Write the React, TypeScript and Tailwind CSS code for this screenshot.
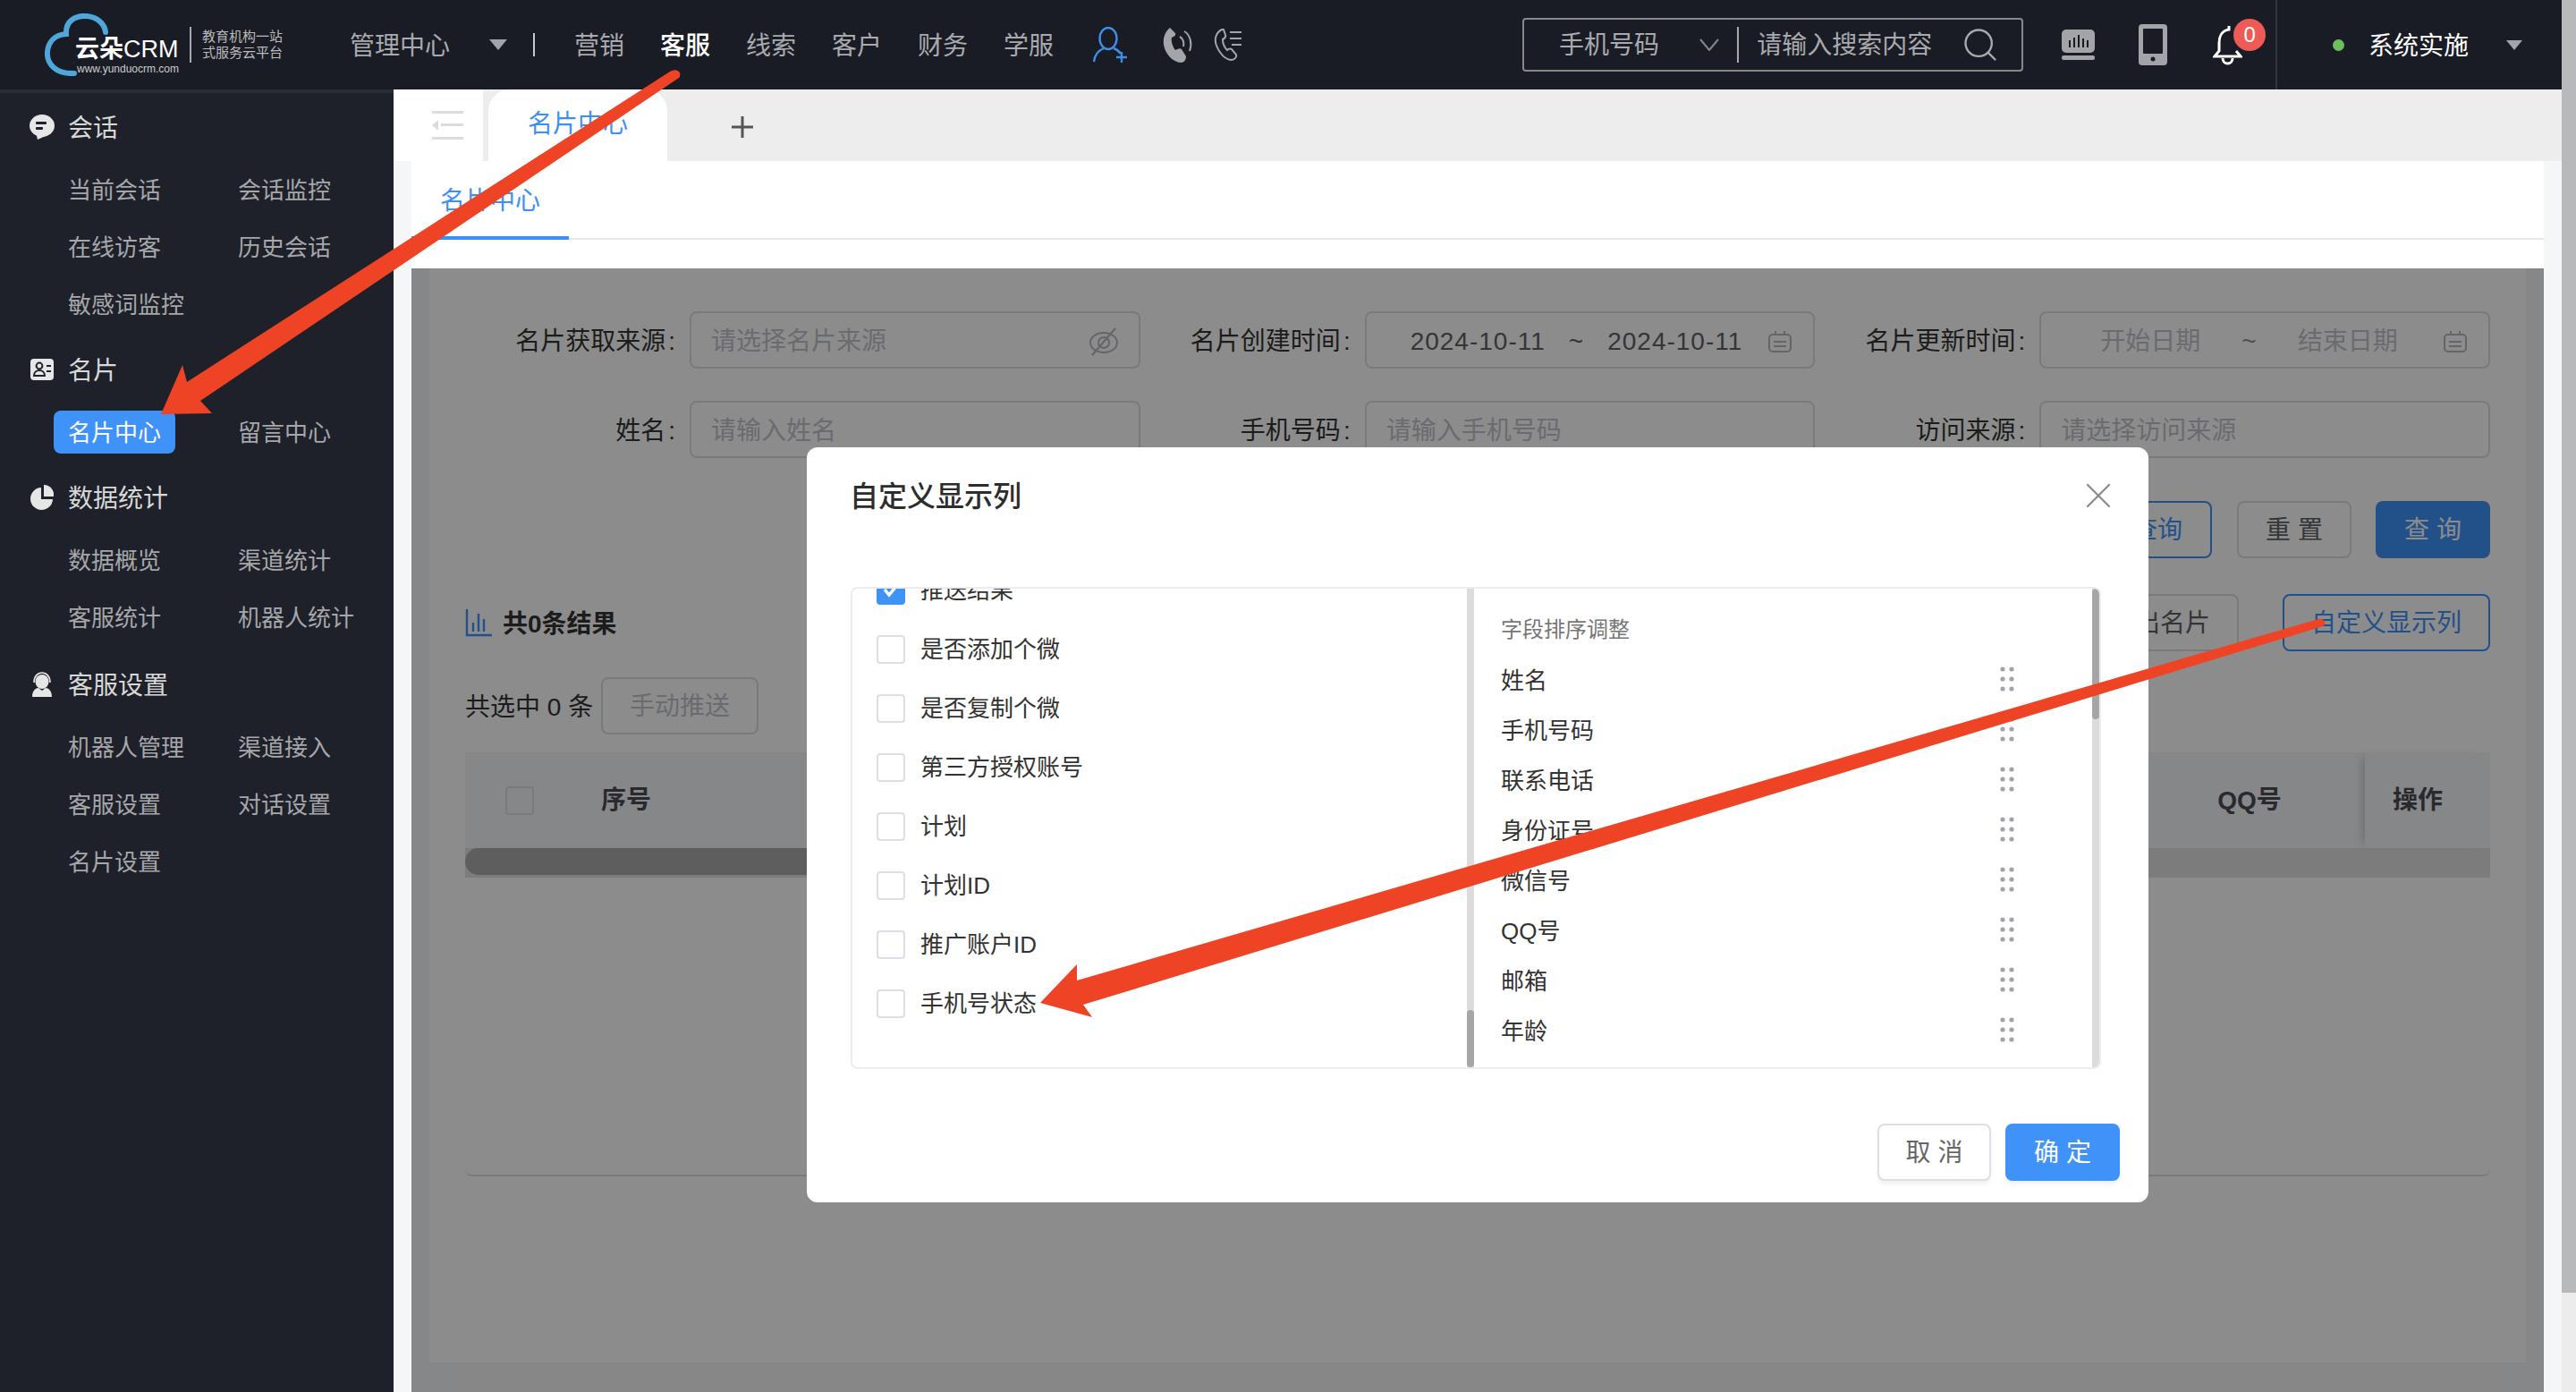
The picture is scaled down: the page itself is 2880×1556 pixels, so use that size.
import React from 'react';
import { Search, X } from 'lucide-react';

const navItems = ['营销', '客服', '线索', '客户', '财务', '学服'];

const menu = [
  { title: '会话', icon: 'chat', gap: '', items: ['当前会话', '会话监控', '在线访客', '历史会话', '敏感词监控'] },
  { title: '名片', icon: 'card', gap: 'mt-[3px]', items: ['名片中心', '留言中心'] },
  { title: '数据统计', icon: 'pie', gap: 'mt-[3px]', items: ['数据概览', '渠道统计', '客服统计', '机器人统计'] },
  { title: '客服设置', icon: 'agent', gap: 'mt-[5px]', items: ['机器人管理', '渠道接入', '客服设置', '对话设置', '名片设置'] },
];

const columnOptions = ['推送结果', '是否添加个微', '是否复制个微', '第三方授权账号', '计划', '计划ID', '推广账户ID', '手机号状态'];
const sortFields = ['姓名', '手机号码', '联系电话', '身份证号', '微信号', 'QQ号', '邮箱', '年龄'];

const Triangle = ({ className }: { className: string }) => (
  <svg className={className} viewBox="0 0 20 12">
    <polygon points="0,0 20,0 10,12" fill="#a3a4a8" />
  </svg>
);

const MenuIcon = ({ name }: { name: string }) => {
  if (name === 'chat') {
    return (
      <svg className="w-[28px] h-[28px]" viewBox="0 0 28 28">
        <ellipse cx="14" cy="12.5" rx="14" ry="12.5" fill="#e6e6e6" />
        <polygon points="7,20 18,24 9,28" fill="#e6e6e6" />
        <rect x="7" y="8" width="12" height="3" rx="1" fill="#1e2129" />
        <rect x="7" y="14" width="8" height="3" rx="1" fill="#1e2129" />
      </svg>
    );
  }
  if (name === 'card') {
    return (
      <svg className="w-[26px] h-[24px]" viewBox="0 0 26 24">
        <rect width="26" height="24" rx="4" fill="#e6e6e6" />
        <circle cx="10" cy="8" r="3.4" fill="none" stroke="#1e2129" strokeWidth="2" />
        <path d="M4 19c0-4 3-6 6-6s6 2 6 6z" fill="none" stroke="#1e2129" strokeWidth="2" />
        <rect x="18" y="7" width="5" height="2" fill="#1e2129" />
        <rect x="18" y="13" width="5" height="2" fill="#1e2129" />
      </svg>
    );
  }
  if (name === 'pie') {
    return (
      <svg className="w-[26px] h-[28px]" viewBox="0 0 26 28">
        <path d="M12 3a12.5 12.5 0 1 0 13 13H12z" fill="#e6e6e6" />
        <path d="M15 0a11 11 0 0 1 11 13H15z" fill="#e6e6e6" />
      </svg>
    );
  }
  return (
    <svg className="w-[26px] h-[28px]" viewBox="0 0 26 28">
      <path d="M4 12C4 5 8 1 13 1s9 4 9 11" fill="none" stroke="#e6e6e6" strokeWidth="1.6" />
      <ellipse cx="13" cy="11" rx="7.5" ry="8" fill="#e6e6e6" />
      <path d="M2 28c0-7 4-10 7-10l4 3 4-3c3 0 7 3 7 10z" fill="#e6e6e6" />
    </svg>
  );
};

const CalendarIcon = () => (
  <svg className="w-[26px] h-[24px] shrink-0" viewBox="0 0 26 24" fill="none" stroke="#b4b8c0" strokeWidth="2">
    <rect x="1" y="4" width="24" height="19" rx="4" />
    <path d="M8 0v5M18 0v5M6 12h14M6 17h14" />
  </svg>
);

const Field = ({ label, children }: { label: string; children: React.ReactNode }) => (
  <div className="flex items-center">
    <div className="w-[235px] shrink-0 pt-[3px] text-right text-[28px] text-[#333] whitespace-nowrap">
      {label}
      <span className="ml-[3px]">:</span>
    </div>
    <div className="flex-1 ml-[16px] h-[64px] border-2 border-[#dcdfe6] rounded-[8px] flex items-center pl-[22px] pt-[3px] text-[28px] text-[#c0c4cc] relative">
      {children}
    </div>
  </div>
);

const Btn = ({ children, className }: { children: React.ReactNode; className: string }) => (
  <button className={`h-[64px] pt-[2px] rounded-[8px] border-2 text-[28px] flex items-center justify-center shrink-0 ${className}`}>
    {children}
  </button>
);

const CheckBox = ({ checked }: { checked?: boolean }) => (
  <span className={`w-[32px] h-[32px] rounded-[4px] shrink-0 flex items-center justify-center border-2 ${checked ? 'bg-[#3e92f8] border-[#3e92f8]' : 'bg-white border-[#dcdfe6]'}`}>
    {checked && (
      <svg className="w-[20px] h-[20px]" viewBox="0 0 20 20" fill="none" stroke="#fff" strokeWidth="3.5">
        <path d="M3 9l5 6 9-11" />
      </svg>
    )}
  </span>
);

const DragHandle = () => (
  <svg className="w-[16px] h-[28px]" viewBox="0 0 16 28" fill="#a0a4ac">
    {[3, 14, 25].map(y => (
      <React.Fragment key={y}>
        <circle cx="3" cy={y} r="2.6" />
        <circle cx="13" cy={y} r="2.6" />
      </React.Fragment>
    ))}
  </svg>
);

const Header = () => (
  <div className="h-[100px] bg-[#1a1c25] flex items-center pl-[50px] text-[#a9aaad] text-[28px] shrink-0">
    {/* logo */}
    <div className="relative w-[150px] h-[70px] shrink-0">
      <svg className="absolute left-0 top-0 w-[80px] h-[70px]" viewBox="0 0 80 70" fill="none">
        <path d="M33 67C12 68 2 56 3 43 4 31 12 24 24 23 23 8 35 2 47 3c11 1 20 8 21 18" stroke="#4fa6da" strokeWidth="6" strokeLinecap="round" />
      </svg>
      <span className="absolute left-[34px] top-[24px] text-[27px] leading-[32px] font-bold text-white whitespace-nowrap">
        云朵<span className="font-normal">CRM</span>
      </span>
      <span className="absolute left-[36px] top-[55px] text-[12px] leading-[14px] text-[#ccc] whitespace-nowrap">www.yunduocrm.com</span>
    </div>
    <div className="w-[2px] h-[40px] bg-[#aaa] ml-[12px] shrink-0" />
    <div className="ml-[12px] w-[90px] text-[15px] leading-[18px] text-[#bbb] shrink-0">
      <div>教育机构一站</div>
      <div>式服务云平台</div>
    </div>

    <span className="ml-[75px] pt-[3px] whitespace-nowrap">管理中心</span>
    <Triangle className="ml-[44px] w-[20px] h-[12px] shrink-0" />
    <div className="ml-[29px] w-[2px] h-[26px] bg-[#c8c8c8] shrink-0" />
    <div className="ml-[44px] pt-[3px] flex gap-[40px] whitespace-nowrap">
      {navItems.map(item => (
        <span key={item} className={item === '客服' ? 'text-white font-medium' : ''}>{item}</span>
      ))}
    </div>

    <svg className="ml-[43px] w-[40px] h-[40px] shrink-0" viewBox="0 0 40 40" fill="none" stroke="#3d8ee8" strokeWidth="2.4">
      <ellipse cx="18" cy="13" rx="9.5" ry="12" />
      <path d="M2 39c1-9 6-13 11-15M24 24c3 1 6 3 8 6M33 28v12M27 34h12" />
    </svg>
    <svg className="ml-[38px] w-[36px] h-[40px] shrink-0" viewBox="0 0 36 40">
      <path d="M9 1C3 6 0 14 3 24c3 9 11 16 19 16 4-1 5-4 5-7l-5-8c-2-2-5 0-7 1-3-4-5-10-4-14 2-1 5-2 4-5z" fill="#a4a5a9" />
      <path d="M20 11c4 2 5 7 4 11M25 5c7 4 9 14 6 22" fill="none" stroke="#a4a5a9" strokeWidth="2" />
    </svg>
    <svg className="ml-[22px] w-[32px] h-[36px] shrink-0" viewBox="0 0 32 36" fill="none" stroke="#a4a5a9" strokeWidth="2">
      <path d="M9 1C3 4 0 11 3 19c3 8 9 15 16 16 4 0 7-3 6-6l-5-6c-2-1-4 0-5 1-3-3-5-8-5-12 2-1 4-2 3-5L11 1z" />
      <path d="M18 4h13M18 11h13M20 18h11" />
    </svg>

    {/* search */}
    <div className="ml-[313px] w-[560px] h-[60px] border-2 border-[#888] rounded-[4px] flex items-center pl-[39px] shrink-0 whitespace-nowrap">
      <span className="pt-[2px]">手机号码</span>
      <svg className="ml-[45px] w-[22px] h-[14px] shrink-0" viewBox="0 0 22 14" fill="none" stroke="#888" strokeWidth="2">
        <path d="M1 1l10 12L21 1" />
      </svg>
      <div className="ml-[20px] w-[2px] h-[40px] bg-[#aaa] shrink-0" />
      <span className="ml-[20px] pt-[2px]">请输入搜索内容</span>
      <Search className="ml-[32px] w-[44px] h-[44px] text-[#a9aaad] shrink-0" strokeWidth={1.3} />
    </div>

    <svg className="ml-[43px] w-[37px] h-[34px] shrink-0" viewBox="0 0 37 34">
      <rect width="37" height="26" rx="5" fill="#a3a4a8" />
      <path d="M9 12v8M14 9v11M19 6v14M24 10v10M29 12v8" stroke="#1a1c25" strokeWidth="2" />
      <rect y="29" width="37" height="5" rx="2" fill="#a3a4a8" />
    </svg>
    <svg className="ml-[49px] w-[32px] h-[46px] shrink-0" viewBox="0 0 32 46">
      <rect width="32" height="46" rx="4" fill="#a3a4a8" />
      <rect x="5" y="5" width="22" height="28" rx="1" fill="#1a1c25" />
      <circle cx="16" cy="39" r="2.5" fill="#1a1c25" />
    </svg>
    <div className="ml-[51px] relative w-[33px] h-[46px] shrink-0">
      <svg className="w-[33px] h-[46px]" viewBox="0 0 33 46" fill="none" stroke="#fff" strokeWidth="3">
        <path d="M18 2v4C10 7 7 14 7 21v9l-5 6h29l-5-6" />
        <path d="M11 38c0 8 11 8 11 0" />
      </svg>
      <span className="absolute left-[23px] top-[-6px] w-[36px] h-[36px] rounded-full bg-[#ee5b56] text-white text-[24px] flex items-center justify-center">0</span>
    </div>
    <div className="ml-[37px] w-[2px] h-full bg-[#32353e] shrink-0" />
    <span className="ml-[62px] w-[13px] h-[13px] rounded-full bg-[#6cbf5c] shrink-0" />
    <span className="ml-[27px] pt-[3px] text-white whitespace-nowrap">系统实施</span>
    <Triangle className="ml-[42px] w-[18px] h-[11px] shrink-0" />
  </div>
);

const Sidebar = () => (
  <div className="w-[440px] shrink-0 bg-[#1e2129] border-t-4 border-[#2a2d35]">
    {menu.map(section => (
      <div key={section.title} className={section.gap}>
        <div className="h-[76px] flex items-center text-[28px] text-[#d8d8d8]">
          <div className="w-[76px] flex justify-center pl-[20px] pr-[2px] shrink-0">
            <MenuIcon name={section.icon} />
          </div>
          <span className="pt-[3px]">{section.title}</span>
        </div>
        <div className="grid grid-cols-[190px_1fr] pl-[60px] text-[26px] text-[#a6a7aa]">
          {section.items.map(item => (
            <div key={item} className="h-[64px] flex items-center">
              <span className={`h-[48px] px-[16px] pt-[2px] flex items-center rounded-[8px] whitespace-nowrap ${item === '名片中心' ? 'bg-[#3e92f8] text-white' : ''}`}>
                {item}
              </span>
            </div>
          ))}
        </div>
      </div>
    ))}
  </div>
);

const Modal = () => (
  <div className="absolute left-[442px] top-[200px] w-[1500px] h-[844px] bg-white rounded-[12px]">
    <div className="h-[108px] flex items-center justify-between pl-[48px] pr-[32px]">
      <span className="pt-[2px] text-[32px] font-medium text-[#2d2d2d]">自定义显示列</span>
      <X className="w-[48px] h-[48px] text-[#888]" strokeWidth={1.1} />
    </div>

    <div className="mt-[48px] ml-[49px] mr-[53px] h-[539px] border-2 border-[#ededf0] rounded-[8px] flex overflow-hidden">
      <div className="w-[687px] shrink-0 overflow-hidden">
        <div className="-mt-[31px]">
          {columnOptions.map((opt, i) => (
            <div key={opt} className="h-[66px] flex items-center pl-[27px] text-[26px] text-[#333]">
              <CheckBox checked={i === 0} />
              <span className="ml-[17px]">{opt}</span>
            </div>
          ))}
        </div>
      </div>
      <div className="w-[8px] shrink-0 bg-[#dcdcdc] flex flex-col justify-end">
        <div className="h-[64px] bg-[#a6a6a6] rounded-[4px]" />
      </div>
      <div className="flex-1 pl-[30px] pr-[87px] pt-[25px]">
        <div className="h-[40px] pt-[2px] flex items-center text-[24px] text-[#777]">字段排序调整</div>
        <div className="mt-[8px]">
          {sortFields.map(f => (
            <div key={f} className="h-[56px] flex items-center justify-between text-[26px] text-[#333]">
              <span className="pt-[5px]">{f}</span>
              <DragHandle />
            </div>
          ))}
        </div>
      </div>
      <div className="w-[8px] shrink-0 bg-[#dcdcdc]">
        <div className="h-[146px] bg-[#a6a6a6] rounded-[4px]" />
      </div>
    </div>

    <div className="mt-[61px] flex justify-end gap-[16px] pr-[32px]">
      <Btn className="w-[127px] border-[#dcdfe6] bg-white text-[#666] shadow-[0_4px_4px_#f2f2f2]">取 消</Btn>
      <Btn className="w-[128px] border-[#3e92f8] bg-[#3e92f8] text-white shadow-[0_4px_4px_#f2f2f2]">确 定</Btn>
    </div>
  </div>
);

const PageContent = () => (
  <div className="bg-white mx-[20px] h-[1223px] pt-[48px] px-[40px]">
    <div className="grid grid-cols-3 gap-y-[36px]">
      <Field label="名片获取来源">
        请选择名片来源
        <svg className="absolute right-[22px] w-[34px] h-[32px]" viewBox="0 0 34 32" fill="none" stroke="#b4b8c0" strokeWidth="2">
          <ellipse cx="17" cy="17" rx="15" ry="11" />
          <circle cx="17" cy="17" r="6" />
          <path d="M30 1L4 31" />
        </svg>
      </Field>
      <Field label="名片创建时间">
        <div className="flex items-center pl-[27px] text-[#606266] tracking-[1px] whitespace-nowrap">
          <span>2024-10-11</span>
          <span className="ml-[26px]">~</span>
          <span className="ml-[26px]">2024-10-11</span>
        </div>
        <span className="absolute right-[24px] flex"><CalendarIcon /></span>
      </Field>
      <Field label="名片更新时间">
        <div className="flex items-center pl-[44px] whitespace-nowrap">
          <span>开始日期</span>
          <span className="ml-[46px] text-[#909399]">~</span>
          <span className="ml-[46px]">结束日期</span>
        </div>
        <span className="absolute right-[24px] flex"><CalendarIcon /></span>
      </Field>
      <Field label="姓名">请输入姓名</Field>
      <Field label="手机号码">请输入手机号码</Field>
      <Field label="访问来源">请选择访问来源</Field>
    </div>

    <div className="mt-[48px] flex justify-end">
      <Btn className="w-[178px] border-[#3e92f8] text-[#3e92f8]">高级查询</Btn>
      <Btn className="ml-[28px] w-[128px] border-[#dcdfe6] text-[#606266]">重 置</Btn>
      <Btn className="ml-[27px] w-[128px] border-[#3e92f8] bg-[#3e92f8] text-white">查 询</Btn>
    </div>

    <div className="mt-[40px] flex items-center justify-between">
      <div className="flex items-center text-[28px] font-bold text-[#333]">
        <svg className="w-[30px] h-[32px] mr-[12px]" viewBox="0 0 30 32" fill="none" stroke="#3e92f8" strokeWidth="2.4">
          <path d="M2 1v29h28M9 16v10M15 6v20M21 12v14" />
        </svg>
        <span className="pt-[3px]">共0条结果</span>
      </div>
      <div className="flex">
        <Btn className="w-[176px] border-[#dcdfe6] text-[#606266]">导出名片</Btn>
        <Btn className="ml-[49px] w-[232px] border-[#3e92f8] text-[#3e92f8]">自定义显示列</Btn>
      </div>
    </div>

    <div className="mt-[29px] flex items-center text-[28px] text-[#333]">
      <span className="w-[152px] pt-[3px] whitespace-nowrap">共选中 0 条</span>
      <Btn className="w-[176px] border-[#dcdfe6] text-[#c0c4cc]">手动推送</Btn>
    </div>

    <div className="mt-[20px] h-[474px] border-b-2 border-[#dcdfe6] rounded-b-[8px]">
      <div className="h-[107px] bg-[#f5f6f8] flex items-center text-[28px] font-semibold text-[#4a4d55]">
        <div className="w-[152px] pl-[45px] shrink-0">
          <span className="block w-[32px] h-[32px] border-2 border-[#dcdfe6] rounded-[4px] bg-[#f5f6f8]" />
        </div>
        <span className="flex-1">序号</span>
        <span className="w-[258px] text-center shrink-0">QQ号</span>
        <span className="w-[140px] h-full flex items-center justify-center pr-[22px] shrink-0 shadow-[-8px_0_10px_-6px_rgba(0,0,0,0.2)]">操作</span>
      </div>
      <div className="h-[33px] bg-[#e2e2e2]">
        <div className="w-[1500px] h-[30px] bg-[#ababab] rounded-full" />
      </div>
    </div>
  </div>
);

export default function App() {
  return (
    <div className="relative w-[2880px] h-[1556px] flex overflow-hidden bg-white font-['Liberation_Sans','Noto_Sans_CJK_SC',sans-serif]">
      <div className="flex-1 flex flex-col min-w-0">
        <Header />
        <div className="flex-1 flex min-h-0">
          <Sidebar />
          <div className="flex-1 flex flex-col bg-[#f5f6f8] min-w-0">
            {/* tab bar */}
            <div className="h-[80px] bg-[#ededed] flex shrink-0">
              <div className="w-[100px] bg-white flex items-center pl-[43px]">
                <svg className="w-[35px] h-[32px]" viewBox="0 0 35 32" fill="#dcdcdc">
                  <rect width="35" height="3" />
                  <rect x="10" y="14" width="25" height="3" />
                  <rect y="29" width="35" height="3" />
                  <polygon points="0,16 7,10 7,22" />
                </svg>
              </div>
              <div className="ml-[6px] w-[200px] bg-white rounded-t-[24px] flex items-center justify-center text-[28px] text-[#3e8ef7] pb-[2px]">
                名片中心
              </div>
              <div className="ml-[72px] w-[24px] flex items-center pt-[3px]">
                <svg className="w-[24px] h-[24px]" viewBox="0 0 24 24" stroke="#555" strokeWidth="3">
                  <path d="M12 0v24M0 12h24" />
                </svg>
              </div>
            </div>

            {/* sub tabs */}
            <div className="mx-[20px] h-[120px] bg-white shrink-0">
              <div className="h-[88px] border-b-2 border-[#e8e8e8] flex">
                <div className="w-[176px] h-[88px] border-b-4 border-[#3e8ef7] flex items-center justify-center text-[28px] text-[#3e8ef7] pt-[6px]">
                  名片中心
                </div>
              </div>
            </div>

            {/* page under the dialog mask */}
            <div className="flex-1 mx-[20px] bg-[#f5f6f8] relative overflow-hidden">
              <PageContent />
              <div className="absolute inset-0 bg-black/45">
                <Modal />
              </div>
            </div>
          </div>
        </div>
      </div>

      {/* page scrollbar */}
      <div className="w-[16px] shrink-0 flex flex-col bg-[#ececec]">
        <div className="h-[1445px] bg-[#b8b9bb]" />
      </div>

      {/* annotation arrows */}
      <svg className="absolute inset-0 w-[2880px] h-[1556px] pointer-events-none" viewBox="0 0 2880 1556" fill="#ee4324">
        <path d="M749 80 Q756 76 760 81 Q761 85 759 87 L224 448 L237 462 L180 463 L204 408 L209 427 Z" />
        <path d="M2592 692 Q2597 691 2599 695 Q2600 699 2597 700 L1211 1123 L1221 1137 L1163 1121 L1204 1078 L1204 1096 Z" />
      </svg>
    </div>
  );
}
